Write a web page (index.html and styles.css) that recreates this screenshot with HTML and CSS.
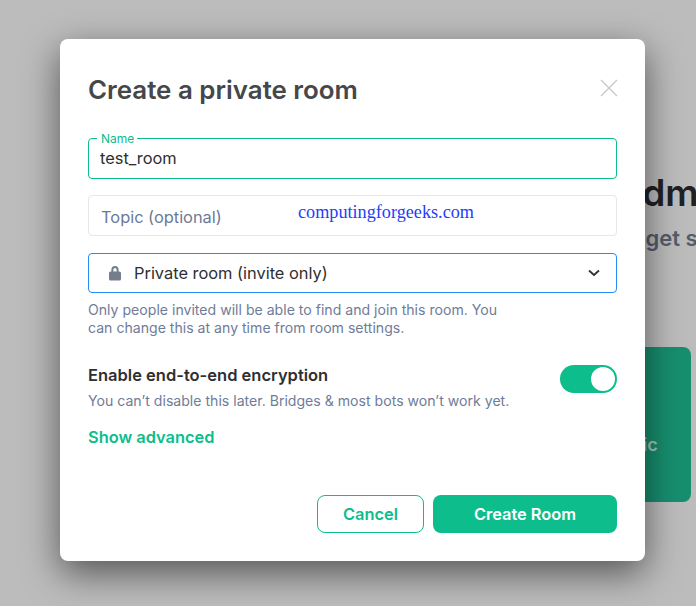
FILE: index.html
```html
<!DOCTYPE html>
<html>
<head>
  <meta charset="utf-8">
  <link rel="stylesheet" href="styles.css">
</head>
<body>
  <!-- Page behind the dialog -->
  <main class="backdrop">
    <h2 class="welcome-title">Welcome admin</h2>
    <p class="welcome-sub">Now, let's help you get started</p>
    <div class="action-card"><span>Public</span></div>
  </main>

  <div class="dialog">
    <div class="dialog-header">
      <h1 class="dialog-title">Create a private room</h1>
      <svg class="close-icon" viewBox="0 0 18 18" width="18" height="18">
        <path d="M1 1l16 16M17 1L1 17" stroke="#c9c9c9" stroke-width="1.4" fill="none"/>
      </svg>
    </div>

    <div class="field field-focus">
      <span class="field-label">Name</span>
      <span class="field-value">test_room</span>
    </div>

    <div class="field field-topic">
      <span class="field-placeholder">Topic (optional)</span>
    </div>

    <div class="field field-select">
      <svg class="lock-icon" viewBox="0 0 14 16" width="14" height="16">
        <path d="M3.4 7V4.6a3.6 3.6 0 0 1 7.2 0V7h-2V4.6a1.6 1.6 0 0 0-3.2 0V7z" fill="#737d8c"/>
        <rect x="1" y="6.6" width="12" height="9" rx="1.6" fill="#737d8c"/>
      </svg>
      <span class="select-value">Private room (invite only)</span>
      <svg class="chevron-icon" viewBox="0 0 12 8" width="12" height="8">
        <path d="M1 1.5l5 4.5 5-4.5" stroke="#2e2f32" stroke-width="1.7" fill="none"/>
      </svg>
    </div>

    <p class="hint">Only people invited will be able to find and join this room. You can change this at any time from room settings.</p>

    <div class="encrypt-row">
      <div>
        <div class="encrypt-title">Enable end-to-end encryption</div>
        <p class="encrypt-hint">You can’t disable this later. Bridges &amp; most bots won’t work yet.</p>
      </div>
      <div class="toggle"><div class="toggle-knob"></div></div>
    </div>

    <div class="show-advanced">Show advanced</div>

    <div class="dialog-buttons">
      <button class="btn btn-outline">Cancel</button>
      <button class="btn btn-primary">Create Room</button>
    </div>
  </div>

  <div class="watermark">computingforgeeks.com</div>
</body>
</html>
```

FILE: styles.css
```css
* {
  box-sizing: border-box;
}

body {
  width: 696px;
  height: 606px;
  margin: 0;
  overflow: hidden;
  position: relative;
  font-family: Inter, "Noto Sans", sans-serif;
  background: #bcbcbc;
}

.backdrop {
  height: 606px;
  padding: 168px 0 0 445px;
  overflow: hidden;
}

.welcome-title {
  margin: 0;
  font-size: 37px;
  line-height: 50px;
  font-weight: 600;
  color: #1f2125;
  white-space: nowrap;
}

.welcome-sub {
  margin: 6px 0 0 -6px;
  font-size: 22px;
  line-height: 28px;
  font-weight: 600;
  color: #545d6c;
  white-space: nowrap;
}

.action-card {
  width: 246px;
  height: 155px;
  margin-top: 95px;
  padding: 87px 0 0 159px;
  border-radius: 8px;
  background: #178f6f;
  color: #a5c9bd;
  font-size: 18px;
  font-weight: 600;
}

.dialog {
  position: absolute;
  left: 60px;
  top: 39px;
  width: 585px;
  height: 522px;
  padding: 32px 28px 28px;
  border-radius: 8px;
  background: #fff;
  box-shadow: 0 12px 36px rgba(0, 0, 0, 0.55);
}

.dialog-header {
  display: flex;
  justify-content: space-between;
  align-items: center;
  height: 36px;
  margin-bottom: 31px;
}

.dialog-title {
  margin: 0;
  font-size: 25.9px;
  font-weight: 600;
  color: #45474a;
}

.close-icon {
  margin: 0 -1px 2px 0;
}

.field {
  position: relative;
  display: flex;
  align-items: center;
  height: 41px;
  margin-bottom: 16px;
  padding: 0 12px;
  border: 1px solid #e7e7e7;
  border-radius: 4px;
  font-size: 16.4px;
}

.field-focus {
  padding: 0 11px 2px;
  border-color: #0dbd8b;
}

.field-topic {
  margin-bottom: 17px;
  padding-top: 2px;
}

.field-label {
  position: absolute;
  left: 8px;
  top: -8px;
  padding: 0 3px 0 4px;
  background: #fff;
  font-size: 12px;
  line-height: 15px;
  color: #0dbd8b;
}

.field-value {
  color: #2e2f32;
}

.field-placeholder {
  color: #6b7a96;
}

.field-select {
  height: 40px;
  margin-bottom: 0;
  padding: 0 16px 0 19px;
  border-color: #238cf5;
}

.lock-icon {
  margin-right: 12px;
}

.select-value {
  flex: 1;
  color: #2e2f32;
}

.hint {
  width: 420px;
  margin: 8px 0 0;
  font-size: 14.1px;
  line-height: 18px;
  color: #6f7c99;
}

.encrypt-row {
  display: flex;
  justify-content: space-between;
  margin-top: 27px;
}

.encrypt-title {
  font-size: 16.5px;
  line-height: 22px;
  font-weight: 600;
  color: #2e2f32;
}

.encrypt-hint {
  margin: 6px 0 0;
  font-size: 14.1px;
  line-height: 17px;
  color: #6f7c99;
}

.toggle {
  display: flex;
  justify-content: flex-end;
  align-items: center;
  width: 57px;
  height: 28px;
  margin-top: 1px;
  padding: 2px;
  border-radius: 14px;
  background: #0dbd8b;
}

.toggle-knob {
  width: 24px;
  height: 24px;
  border-radius: 50%;
  background: #fff;
}

.show-advanced {
  margin-top: 18px;
  font-size: 16.4px;
  line-height: 20px;
  font-weight: 600;
  color: #0dbd8b;
}

.dialog-buttons {
  display: flex;
  justify-content: flex-end;
  gap: 9px;
  margin-top: 48px;
}

.btn {
  height: 38px;
  border-radius: 8px;
  font-family: inherit;
  font-size: 16.4px;
  font-weight: 600;
}

.btn-outline {
  width: 107px;
  border: 1px solid #0dbd8b;
  background: #fff;
  color: #0dbd8b;
}

.btn-primary {
  width: 184px;
  border: none;
  background: #0dbd8b;
  color: #fff;
}

.watermark {
  position: absolute;
  left: 298px;
  top: 202px;
  font-family: "Liberation Serif", serif;
  font-size: 18.2px;
  line-height: 21px;
  color: #2440f5;
}
```
